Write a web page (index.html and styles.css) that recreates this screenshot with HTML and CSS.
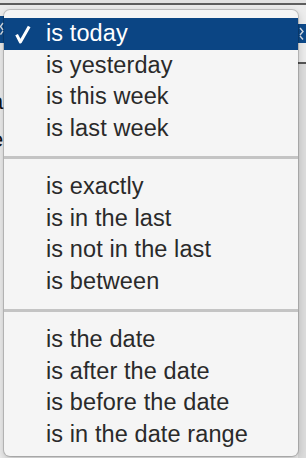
FILE: index.html
```html
<!DOCTYPE html>
<html>
<head>
<meta charset="utf-8">
<link rel="stylesheet" href="styles.css">
</head>
<body>
<div class="window">
  <div class="titlebar"></div>
  <div class="content">
    <div class="popup-row">
      <div class="popup-left">
        <svg width="5" height="27" viewBox="0 0 5 27"><path d="M3 7 L0.5 10.5 L3 14 M3 15 L0.5 18.5" fill="none" stroke="#d8dfe8" stroke-width="1.4"/></svg>
      </div>
      <div class="popup-right">
        <svg width="8" height="22" viewBox="0 0 8 22"><path d="M2 5 L5 8.5 L2 12 M2 13 L5 16.5" fill="none" stroke="#d8dfe8" stroke-width="1.4"/></svg>
      </div>
    </div>
    <div class="side-right"></div>
    <div class="labels">
      <span class="lab">a</span>
      <span class="lab">e</span>
    </div>
  </div>
</div>

<div class="menu">
  <div class="item selected">
    <svg class="check" width="17" height="19" viewBox="0 0 17 19"><path d="M1.6 9.6 L5.4 17 L14.2 1.6" fill="none" stroke="#fff" stroke-width="3" stroke-linejoin="round"/></svg>
    is today
  </div>
  <div class="item">is yesterday</div>
  <div class="item">is this week</div>
  <div class="item">is last week</div>
  <div class="sep"></div>
  <div class="item">is exactly</div>
  <div class="item">is in the last</div>
  <div class="item">is not in the last</div>
  <div class="item">is between</div>
  <div class="sep"></div>
  <div class="item">is the date</div>
  <div class="item">is after the date</div>
  <div class="item">is before the date</div>
  <div class="item">is in the date range</div>
</div>
</body>
</html>
```

FILE: styles.css
```css
html, body {
  margin: 0;
  padding: 0;
}
body {
  width: 306px;
  height: 458px;
  overflow: hidden;
  background: #ebebeb;
  font-family: "Liberation Sans", Arial, sans-serif;
  position: relative;
}
.window {
  display: flex;
  flex-direction: column;
  height: 458px;
}
.titlebar {
  height: 3px;
  background: #e2e2e2;
  border-bottom: 2px solid #5e5e5e;
}
.content {
  flex: 1;
  position: relative;
  background: #ececec;
}
.popup-row {
  display: flex;
  justify-content: space-between;
  margin-top: 11px;
  height: 27px;
}
.popup-left {
  width: 5px;
  background: #0d4a8a;
  display: flex;
}
.popup-right {
  width: 8px;
  margin-top: 8px;
  background: #0d4a8a;
  display: flex;
  align-items: center;
}
.side-right {
  position: absolute;
  right: 0;
  top: 57px;
  width: 8px;
  bottom: 0;
  background: #dcdcdc;
  border-top: 2px solid #555;
}
.labels {
  display: flex;
  flex-direction: column;
  margin-left: -9px;
  margin-top: 47px;
  gap: 14px;
}
.lab {
  font-size: 22px;
  line-height: 24px;
  color: #111;
}
.menu {
  position: absolute;
  left: 4px;
  top: 10px;
  width: 294px;
  background: #f5f5f5;
  border-radius: 6px;
  padding: 8px 0 6px;
  box-shadow: 0 0 0 1px rgba(0,0,0,0.16), 0 3px 8px rgba(0,0,0,0.22);
  overflow: hidden;
}
.item {
  position: relative;
  height: 31.5px;
  line-height: 31.5px;
  padding-left: 42px;
  font-size: 23.5px;
  letter-spacing: 0.1px;
  color: #2a2a2a;
  white-space: nowrap;
}
.item.selected {
  background: #0b4584;
  color: #ffffff;
}
.check {
  position: absolute;
  left: 11px;
  top: 7px;
}
.sep {
  height: 3px;
  margin: 12px 0;
  background: #c4c4c4;
}
```
